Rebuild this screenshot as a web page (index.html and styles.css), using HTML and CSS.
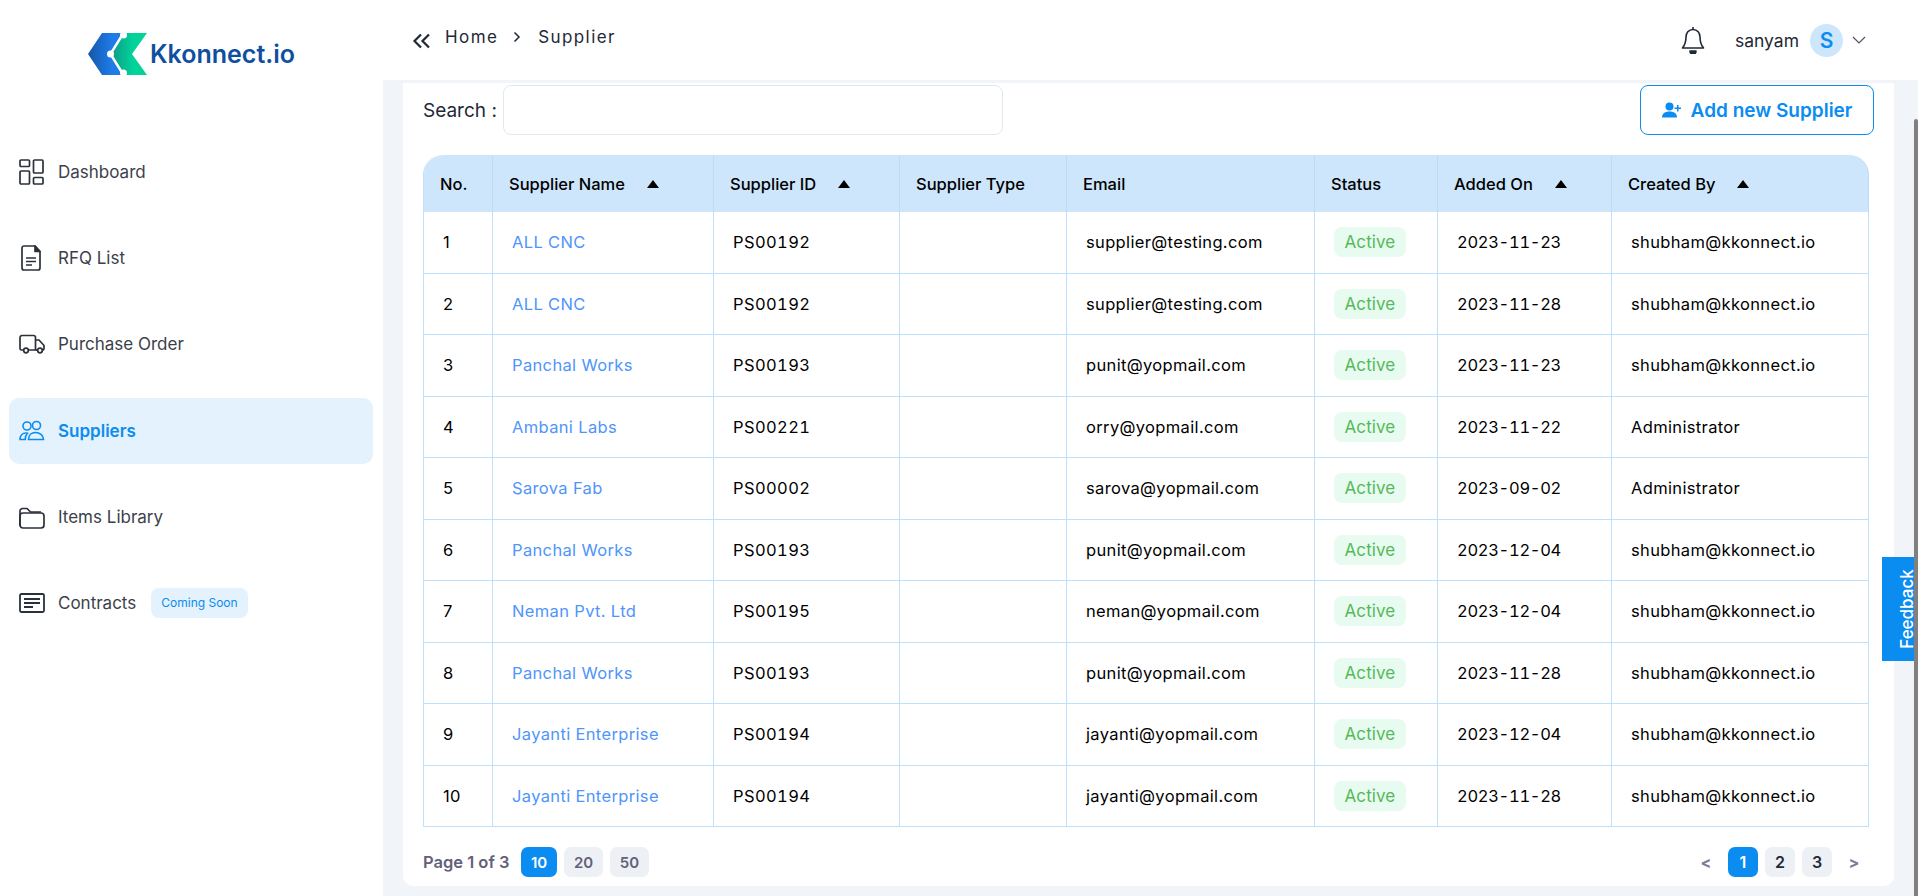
FILE: index.html
```html
<!DOCTYPE html>
<html lang="en">
  <head>
    <meta charset="UTF-8" />
    <meta name="viewport" content="width=device-width, initial-scale=1.0" />
    <title>Supplier</title>
    <link rel="stylesheet" href="styles.css">
  </head>
  <body>
    <div id="app">
      <aside class="sidebar">
        <div class="logo">
          <svg class="logo-mark" width="60" height="44" viewBox="0 0 60 44">
            <defs>
              <linearGradient id="logoBlue" x1="0" x2="1" y1="0" y2="0">
                <stop offset="0" stop-color="#1557a8" />
                <stop offset="0.7" stop-color="#1f7be8" />
              </linearGradient>
              <linearGradient id="logoGreen" x1="0" x2="1" y1="0" y2="0">
                <stop offset="0" stop-color="#0c9c88" />
                <stop offset="0.6" stop-color="#02d39a" />
              </linearGradient>
            </defs>
            <polygon points="14,1 34,1 21,22 34,43 14,43 0,22" fill="url(#logoBlue)" />
            <polygon points="37,1 59,1 44,22 59,43 37,43 24,22" fill="url(#logoGreen)" />
            <circle cx="22.500" cy="22" r="3.500" fill="#fff" />
            <circle cx="35.500" cy="3" r="3.500" fill="#fff" />
            <circle cx="35.500" cy="41" r="3.500" fill="#fff" />
          </svg>
          <span class="logo-text">Kkonnect.io</span>
        </div>
        <nav class="nav">
          <a class="nav-item">
            <svg class="nav-icon" viewBox="0 0 26 26" fill="none" stroke="currentColor" stroke-width="1.700">
              <rect x="1" y="1" width="9.500" height="6.500" rx="1" />
              <rect x="14.500" y="1" width="9.500" height="13" rx="1" />
              <rect x="1" y="12" width="9.500" height="13" rx="1" />
              <rect x="14.500" y="18.500" width="9.500" height="6.500" rx="1" />
            </svg>
            <span>Dashboard</span>
          </a>
          <a class="nav-item">
            <svg class="nav-icon" viewBox="0 0 26 26" fill="none" stroke="currentColor" stroke-width="1.700" stroke-linejoin="round">
              <path d="M5 1h11l5 5.500V23a2 2 0 0 1-2 2H5a2 2 0 0 1-2-2V3a2 2 0 0 1 2-2z" />
              <path d="M16 1v5.500h5z" fill="currentColor" />
              <path d="M7 13h10M7 16.500h10M7 20h6" />
            </svg>
            <span>RFQ List</span>
          </a>
          <a class="nav-item">
            <svg class="nav-icon" viewBox="0 0 26 26" fill="none" stroke="currentColor" stroke-width="1.700" stroke-linejoin="round">
              <path d="M4.500 19H2.500A1.500 1.500 0 0 1 1 17.500V6.500a2 2 0 0 1 2-2h11.500a2 2 0 0 1 2 2V19H9.500" />
              <path d="M16.500 9h3.500l5 5.500v3a1.500 1.500 0 0 1-1.500 1.500h-.5" />
              <path d="M18.500 19h-2" />
              <circle cx="7" cy="19.500" r="2.300" />
              <circle cx="21" cy="19.500" r="2.300" />
            </svg>
            <span>Purchase Order</span>
          </a>
          <a class="nav-item active">
            <svg class="nav-icon" viewBox="0 0 26 26" fill="none" stroke="currentColor" stroke-width="1.600">
              <circle cx="8" cy="8" r="4" />
              <circle cx="17.500" cy="7.500" r="4" />
              <path d="M1 21.500c0-3.800 2.500-6.500 6-6.500 1 0 1.500.2 1.500.2-1.500 1.500-2.300 3.500-2.300 6.300z" />
              <path d="M9.500 21.500c0-4.300 3-7 7-7s8 2.700 8 7z" />
            </svg>
            <span>Suppliers</span>
          </a>
          <a class="nav-item">
            <svg class="nav-icon" viewBox="0 0 26 26" fill="none" stroke="currentColor" stroke-width="1.700" stroke-linejoin="round">
              <path d="M1 22V7a2.500 2.500 0 0 1 2.500-2.500h4.500l3.500 3.500h10.500" />
              <rect x="1" y="9" width="24" height="15" rx="3" />
            </svg>
            <span>Items Library</span>
          </a>
          <a class="nav-item">
            <svg class="nav-icon" viewBox="0 0 26 26" fill="none" stroke="currentColor" stroke-width="1.800">
              <rect x="1" y="4" width="24" height="18" rx="1.500" />
              <path d="M5 9h16M5 13h16M5 17h9" />
            </svg>
            <span>Contracts</span>
            <span class="soon">Coming Soon</span>
          </a>
        </nav>
      </aside>

      <div class="main">
        <header class="topbar">
          <svg class="collapse" width="19" height="16" viewBox="0 0 19 16" fill="none" stroke="#1f2937" stroke-width="2.200">
            <path d="M9 1.500 2.500 8 9 14.500" />
            <path d="M17 1.500 10.500 8 17 14.500" />
          </svg>
          <div class="crumbs">
            <span>Home</span>
            <svg width="8" height="12" viewBox="0 0 8 12" fill="none" stroke="#1f2937" stroke-width="1.500">
              <path d="M1.500 1.500 6 6l-4.500 4.500" />
            </svg>
            <span class="crumb-last">Supplier</span>
          </div>
          <div class="user">
            <svg class="bell" width="24" height="28" viewBox="0 0 24 28" fill="none" stroke="#1f2937" stroke-width="1.600" stroke-linejoin="round">
              <path d="M12 1v2.500" />
              <path d="M12 3.500c-4.500 0-7 3.500-7 7.500 0 5-1 8-3.500 11h21C20 19 19 16 19 11c0-4-2.500-7.500-7-7.500z" />
              <path d="M9 25h6a3 3 0 0 1-6 0z" fill="#1f2937" />
            </svg>
            <span class="user-name">sanyam</span>
            <span class="avatar">S</span>
            <svg width="14" height="8" viewBox="0 0 14 8" fill="none" stroke="#4b5563" stroke-width="1.200">
              <path d="M1 1l6 6 6-6" />
            </svg>
          </div>
        </header>

        <section class="content">
          <div class="card">
            <div class="toolbar">
              <label class="search-label" for="search">Search :</label>
              <input class="search-box" id="search" type="text" />
              <button class="add-btn" type="button">
                <svg width="19" height="16" viewBox="0 0 19 16" fill="#0a8cf0">
                  <circle cx="7.500" cy="4.500" r="4" />
                  <path d="M0 15.500c0-4 3-6 7.500-6s7.500 2 7.500 6z" />
                  <path d="M15 3h1.500v2.500H19V7h-2.500v2.500H15V7h-2.500V5.500H15z" />
                </svg>
                Add new Supplier
              </button>
            </div>

            <table class="table">
              <colgroup>
                <col class="c-no" /><col class="c-name" /><col class="c-id" /><col class="c-type" />
                <col class="c-email" /><col class="c-status" /><col class="c-added" /><col class="c-by" />
              </colgroup>
              <thead>
                <tr>
                  <th>No.</th>
                  <th>Supplier Name<i class="sort"></i></th>
                  <th>Supplier ID<i class="sort"></i></th>
                  <th>Supplier Type</th>
                  <th>Email</th>
                  <th>Status</th>
                  <th>Added On<i class="sort"></i></th>
                  <th>Created By<i class="sort"></i></th>
                </tr>
              </thead>
              <tbody>
                <tr><td>1</td><td><a>ALL CNC</a></td><td class="code">PS00192</td><td></td><td>supplier@testing.com</td><td><span class="pill">Active</span></td><td class="date">2023-11-23</td><td>shubham@kkonnect.io</td></tr>
                <tr><td>2</td><td><a>ALL CNC</a></td><td class="code">PS00192</td><td></td><td>supplier@testing.com</td><td><span class="pill">Active</span></td><td class="date">2023-11-28</td><td>shubham@kkonnect.io</td></tr>
                <tr><td>3</td><td><a>Panchal Works</a></td><td class="code">PS00193</td><td></td><td>punit@yopmail.com</td><td><span class="pill">Active</span></td><td class="date">2023-11-23</td><td>shubham@kkonnect.io</td></tr>
                <tr><td>4</td><td><a>Ambani Labs</a></td><td class="code">PS00221</td><td></td><td>orry@yopmail.com</td><td><span class="pill">Active</span></td><td class="date">2023-11-22</td><td>Administrator</td></tr>
                <tr><td>5</td><td><a>Sarova Fab</a></td><td class="code">PS00002</td><td></td><td>sarova@yopmail.com</td><td><span class="pill">Active</span></td><td class="date">2023-09-02</td><td>Administrator</td></tr>
                <tr><td>6</td><td><a>Panchal Works</a></td><td class="code">PS00193</td><td></td><td>punit@yopmail.com</td><td><span class="pill">Active</span></td><td class="date">2023-12-04</td><td>shubham@kkonnect.io</td></tr>
                <tr><td>7</td><td><a>Neman Pvt. Ltd</a></td><td class="code">PS00195</td><td></td><td>neman@yopmail.com</td><td><span class="pill">Active</span></td><td class="date">2023-12-04</td><td>shubham@kkonnect.io</td></tr>
                <tr><td>8</td><td><a>Panchal Works</a></td><td class="code">PS00193</td><td></td><td>punit@yopmail.com</td><td><span class="pill">Active</span></td><td class="date">2023-11-28</td><td>shubham@kkonnect.io</td></tr>
                <tr><td>9</td><td><a>Jayanti Enterprise</a></td><td class="code">PS00194</td><td></td><td>jayanti@yopmail.com</td><td><span class="pill">Active</span></td><td class="date">2023-12-04</td><td>shubham@kkonnect.io</td></tr>
                <tr><td>10</td><td><a>Jayanti Enterprise</a></td><td class="code">PS00194</td><td></td><td>jayanti@yopmail.com</td><td><span class="pill">Active</span></td><td class="date">2023-11-28</td><td>shubham@kkonnect.io</td></tr>
              </tbody>
            </table>

            <div class="pager">
              <div class="page-sizes">
                <span class="page-info">Page 1 of 3</span>
                <button class="size-btn on" type="button">10</button>
                <button class="size-btn" type="button">20</button>
                <button class="size-btn" type="button">50</button>
              </div>
              <div class="page-nums">
                <span class="arrow">&lt;</span>
                <button class="num-btn on" type="button">1</button>
                <button class="num-btn" type="button">2</button>
                <button class="num-btn" type="button">3</button>
                <span class="arrow">&gt;</span>
              </div>
            </div>
          </div>
        </section>
      </div>
    </div>
    <div class="feedback"><span>Feedback</span></div>
    <div class="scroll-thumb"></div>
  </body>
</html>
```

FILE: styles.css
```css
* {
  padding: 0;
  margin: 0;
  box-sizing: border-box;
}
html,
body {
  height: 100%;
  overflow: hidden;
}
body {
  font-family: Inter, "Noto Sans", sans-serif;
  font-size: 16px;
  color: #000;
  background: #f1f5f9;
}
button {
  font-family: inherit;
  border: 0;
}
#app {
  display: flex;
  height: 896px;
}

/* sidebar */
.sidebar {
  width: 383px;
  flex-shrink: 0;
  background: #fff;
}
.logo {
  display: flex;
  align-items: center;
  height: 139px;
  padding: 0 0 32px 88px;
}
.logo-mark {
  flex-shrink: 0;
}
.logo-text {
  margin-left: 2px;
  font-size: 25px;
  font-weight: 600;
  color: #0f4fa0;
}
.nav {
  display: flex;
  flex-direction: column;
  gap: 20px;
  padding: 0 10px 0 9px;
}
.nav-item {
  display: flex;
  align-items: center;
  height: 66px;
  padding-left: 10px;
  border-radius: 10px;
  color: #3b414b;
  font-size: 17px;
}
.nav-icon {
  width: 26px;
  height: 26px;
  margin-right: 13px;
  flex-shrink: 0;
  color: #2b313b;
}
.nav-item.active {
  margin-top: 1px;
  background: #e3f2fc;
  color: #0a8cf0;
  font-weight: 600;
}
.nav-item.active .nav-icon {
  color: #0a8cf0;
}
.soon {
  margin-left: 15px;
  padding: 0 10px;
  height: 30px;
  line-height: 30px;
  border-radius: 8px;
  background: #e3f2fc;
  color: #0a8cf0;
  font-size: 12px;
}

/* top bar */
.main {
  flex: 1;
  min-width: 0;
  display: flex;
  flex-direction: column;
}
.topbar {
  display: flex;
  align-items: center;
  height: 80px;
  padding: 0 52px 0 29px;
  background: #fff;
}
.collapse {
  margin-top: 2px;
}
.crumbs {
  display: flex;
  align-items: center;
  gap: 15px;
  margin: -7px 0 0 14px;
  font-size: 17px;
  letter-spacing: 1.4px;
  color: #1f2937;
}
.crumb-last {
  margin-left: 2px;
}
.user {
  display: flex;
  align-items: center;
  margin-left: auto;
}
.bell {
  margin-right: 30px;
}
.user-name {
  font-size: 17.5px;
  color: #1f2937;
}
.avatar {
  width: 33px;
  height: 33px;
  margin: 0 9px 0 11px;
  border-radius: 50%;
  background: #cde6fb;
  color: #0a8cf0;
  font-size: 21px;
  font-weight: 600;
  line-height: 33px;
  text-align: center;
}

/* card */
.content {
  flex: 1;
  padding: 3px 24px 10px 20px;
}
.card {
  height: 803px;
  padding: 2px 20px 0;
  background: #fff;
  border-radius: 0 0 10px 10px;
}
.toolbar {
  display: flex;
  align-items: center;
  height: 50px;
}
.search-label {
  font-size: 19px;
  color: #1f2937;
  width: 80px;
}
.search-box {
  width: 500px;
  height: 50px;
  border: 1px solid #e2e8f0;
  border-radius: 8px;
}
.add-btn {
  display: flex;
  align-items: center;
  justify-content: center;
  gap: 10px;
  width: 234px;
  height: 50px;
  margin-left: auto;
  border: 1.5px solid #0a8cf0;
  border-radius: 8px;
  background: #fff;
  color: #0a8cf0;
  font-size: 19px;
  font-weight: 600;
}

/* table */
.table {
  width: 1446px;
  margin-top: 20px;
  table-layout: fixed;
  border-collapse: separate;
  border-spacing: 0;
  border-left: 1px solid #bfe0fa;
  border-top-left-radius: 20px;
  border-top-right-radius: 20px;
}
.c-no { width: 69px; }
.c-name { width: 221px; }
.c-id { width: 186px; }
.c-type { width: 167px; }
.c-email { width: 248px; }
.c-status { width: 123px; }
.c-added { width: 174px; }
.c-by { width: 257px; }
.table th {
  height: 57px;
  padding-left: 16px;
  background: #cde6fb;
  border-right: 1px solid #bcdcf5;
  text-align: left;
  font-size: 16.5px;
  font-weight: 500;
}
.table th:first-child {
  border-top-left-radius: 20px;
}
.table th:last-child {
  border-top-right-radius: 20px;
}
.sort {
  display: inline-block;
  margin-left: 22px;
  vertical-align: 2px;
  border-left: 6px solid transparent;
  border-right: 6px solid transparent;
  border-bottom: 8px solid #000;
}
.table td {
  height: 61.5px;
  padding-left: 19px;
  border-right: 1px solid #bfe0fa;
  border-bottom: 1px solid #bfe0fa;
  font-size: 16.5px;
  letter-spacing: 0.35px;
}
.table td.code {
  font-variant-numeric: tabular-nums;
  letter-spacing: 0.4px;
}
.table td.date {
  font-variant-numeric: tabular-nums;
  letter-spacing: -0.3px;
}
.table a {
  color: #4f95fb;
}
.pill {
  display: inline-block;
  height: 30px;
  padding: 0 10.5px;
  border-radius: 8px;
  background: #e8fbf0;
  color: #55b95a;
  font-size: 17px;
  letter-spacing: 0.1px;
  line-height: 30px;
}

/* pager */
.pager {
  display: flex;
  justify-content: space-between;
  align-items: center;
  width: 1446px;
  margin-top: 20px;
}
.page-sizes,
.page-nums {
  display: flex;
  align-items: center;
  gap: 7px;
}
.page-info {
  margin-right: 1px;
  width: 90px;
  font-size: 16.5px;
  font-weight: 600;
  color: #64607a;
}
.size-btn,
.num-btn {
  height: 30px;
  border-radius: 7px;
  background: #edf1f6;
  font-weight: 600;
}
.size-btn {
  width: 39px;
  font-size: 15px;
  color: #64607a;
}
.num-btn {
  width: 30px;
  font-size: 16px;
  color: #1f2937;
}
.size-btn.on,
.num-btn.on {
  background: #0a8cf0;
  color: #fff;
}
.size-btn.on {
  width: 36px;
}
.arrow {
  width: 30px;
  text-align: center;
  color: #7c7c95;
  font-size: 16px;
  font-weight: 700;
}

/* fixed overlays */
.feedback {
  position: fixed;
  top: 557px;
  right: 0;
  display: flex;
  align-items: center;
  justify-content: center;
  width: 36px;
  height: 104px;
  padding-left: 14px;
  background: #0a8cf0;
  color: #fff;
  font-size: 17px;
  font-weight: 500;
}
.feedback span {
  transform: rotate(-90deg);
}
.scroll-thumb {
  position: fixed;
  top: 119px;
  right: 0;
  bottom: 0;
  width: 4px;
  border-radius: 2px 2px 0 0;
  background: #808080;
}
```
